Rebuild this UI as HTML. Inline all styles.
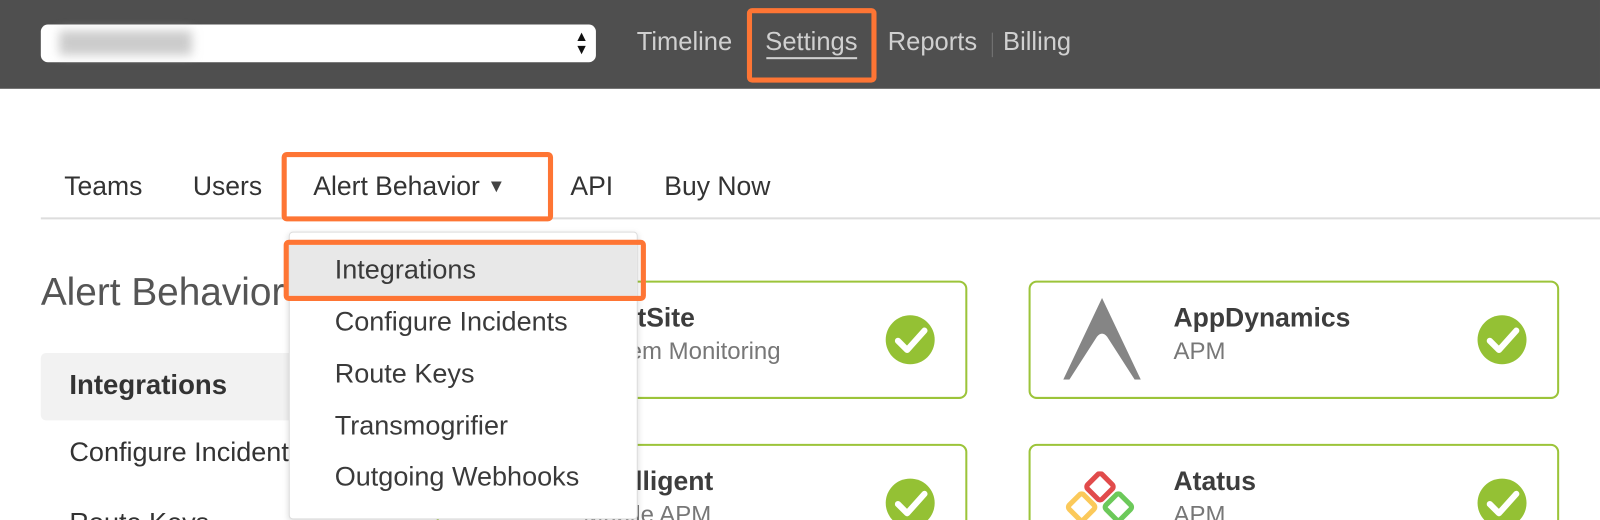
<!DOCTYPE html>
<html style="overflow:hidden;height:520px"><head><meta charset="utf-8"><style>
*{margin:0;padding:0;box-sizing:border-box}
body{width:1600px;height:520px;overflow:hidden;background:#fff;font-family:"Liberation Sans",sans-serif;color:#333}
#clip{position:relative;width:1600px;height:520px;overflow:hidden}
#w{position:absolute;left:0;top:0;width:1568px;height:510px;transform:scale(1.0204);transform-origin:0 0}
.a{position:absolute;white-space:nowrap}
.top{position:absolute;left:0;top:0;width:1568px;height:87px;background:#4f4f4f}
.nav{color:#d0d0d0;font-size:25px;top:27px}
.ob{position:absolute;border:5px solid #fe7534;border-radius:5px}
.tab{font-size:26px;top:167px;color:#333}
.dd{font-size:26.5px;color:#3a3a3a;left:328px}
.card{position:absolute;width:520px;height:116px;border:2px solid #9cc43a;border-radius:8px;background:#fff}
.t{font-weight:bold;font-size:26px;color:#3d3d3d}
.s{font-size:23.5px;color:#777}
.chk{position:absolute;width:48px;height:48px;border-radius:50%;background:#94c134}
</style></head><body><div id="clip"><div id="w">
<div class="top"></div>
<div class="a" style="left:40px;top:24px;width:544px;height:37px;background:#fff;border-radius:7px"></div>
<div class="a" style="left:58px;top:30px;width:130px;height:24px;background:#ccc;filter:blur(5px)"></div>
<div class="a" style="left:563px;top:29px;font-size:14px;line-height:13px;color:#111">▲<br>▼</div>
<div class="a nav" style="left:624px">Timeline</div>
<div class="a nav" style="left:750px">Settings</div>
<div class="a" style="left:751px;top:56px;width:89px;height:2px;background:#d0d0d0"></div>
<div class="a nav" style="left:870px">Reports</div>
<div class="a" style="left:972px;top:32px;width:1px;height:24px;background:#777"></div>
<div class="a nav" style="left:983px">Billing</div>
<div class="ob" style="left:732px;top:8px;width:127px;height:73px"></div>

<div class="a tab" style="left:63px">Teams</div>
<div class="a tab" style="left:189px">Users</div>
<div class="a tab" style="left:307px">Alert Behavior <span style="font-size:18px;position:relative;top:-3px;color:#444">▼</span></div>
<div class="a tab" style="left:559px">API</div>
<div class="a tab" style="left:651px">Buy Now</div>
<div class="a" style="left:40px;top:213px;width:1528px;height:2px;background:#ddd"></div>
<div class="ob" style="left:276px;top:149px;width:266px;height:68px"></div>

<div class="a" style="left:40px;top:266px;font-size:38px;color:#555">Alert Behavior</div>
<div class="a" style="left:40px;top:346px;width:260px;height:66px;background:#f2f2f2;border-radius:5px"></div>
<div class="a" style="left:68px;top:362px;font-size:27px;font-weight:bold;color:#333">Integrations</div>
<div class="a" style="left:68px;top:428px;font-size:26.5px;color:#333">Configure Incidents</div>
<div class="a" style="left:68px;top:497px;font-size:26.5px;color:#333">Route Keys</div>

<div class="card" style="left:428px;top:275px"></div>
<div class="a t" style="right:887px;top:296px">AlertSite</div>
<div class="a s" style="right:803px;top:331px">System Monitoring</div>
<div class="chk" style="left:868px;top:309px"></div>
<div class="card" style="left:428px;top:435px"></div>
<div class="a t" style="right:869px;top:456px">Intelligent</div>
<div class="a s" style="right:871px;top:491px">Mobile APM</div>
<div class="chk" style="left:868px;top:469px"></div>

<div class="card" style="left:1008px;top:275px"></div>
<svg class="a" style="left:1040px;top:292px" width="80" height="80" viewBox="0 0 80 80"><path d="M40 0 L78 80 L72 80 L45 38 Q40 32 35 38 L8 80 L2 80 Z" fill="#858585"/></svg>
<div class="a t" style="left:1150px;top:296px">AppDynamics</div>
<div class="a s" style="left:1150px;top:331px">APM</div>
<div class="chk" style="left:1448px;top:309px"></div>
<div class="card" style="left:1008px;top:435px"></div>
<svg class="a" style="left:1040px;top:462px" width="80" height="58" viewBox="0 0 80 58"><g fill="none" stroke-width="5"><rect x="28" y="5" width="20" height="20" transform="rotate(45 38 15)" stroke="#e14b4b" rx="3"/><rect x="10" y="25" width="20" height="20" transform="rotate(45 20 35)" stroke="#fbc95a" rx="3"/><rect x="46" y="25" width="20" height="20" transform="rotate(45 56 35)" stroke="#6cc95a" rx="3"/></g></svg>
<div class="a t" style="left:1150px;top:456px">Atatus</div>
<div class="a s" style="left:1150px;top:491px">APM</div>
<div class="chk" style="left:1448px;top:469px"></div>

<div class="a" style="left:283px;top:227px;width:342px;height:282px;background:#fff;border:1px solid #ddd;border-radius:4px;box-shadow:0 2px 6px rgba(0,0,0,.15)"></div>
<div class="a" style="left:284px;top:240px;width:340px;height:50px;background:#e8e8e8"></div>
<div class="a dd" style="top:249px">Integrations</div>
<div class="a dd" style="top:300px">Configure Incidents</div>
<div class="a dd" style="top:351px">Route Keys</div>
<div class="a dd" style="top:402px">Transmogrifier</div>
<div class="a dd" style="top:452px">Outgoing Webhooks</div>
<div class="ob" style="left:278px;top:235px;width:355px;height:60px"></div>

<svg class="a" style="left:0;top:0" width="1568" height="510"><g fill="none" stroke="#fff" stroke-width="6" stroke-linecap="round" stroke-linejoin="round"><path d="M880 334l9 9 17-19"/><path d="M880 494l9 9 17-19"/><path d="M1460 334l9 9 17-19"/><path d="M1460 494l9 9 17-19"/></g></svg>
</div></div></body></html>
